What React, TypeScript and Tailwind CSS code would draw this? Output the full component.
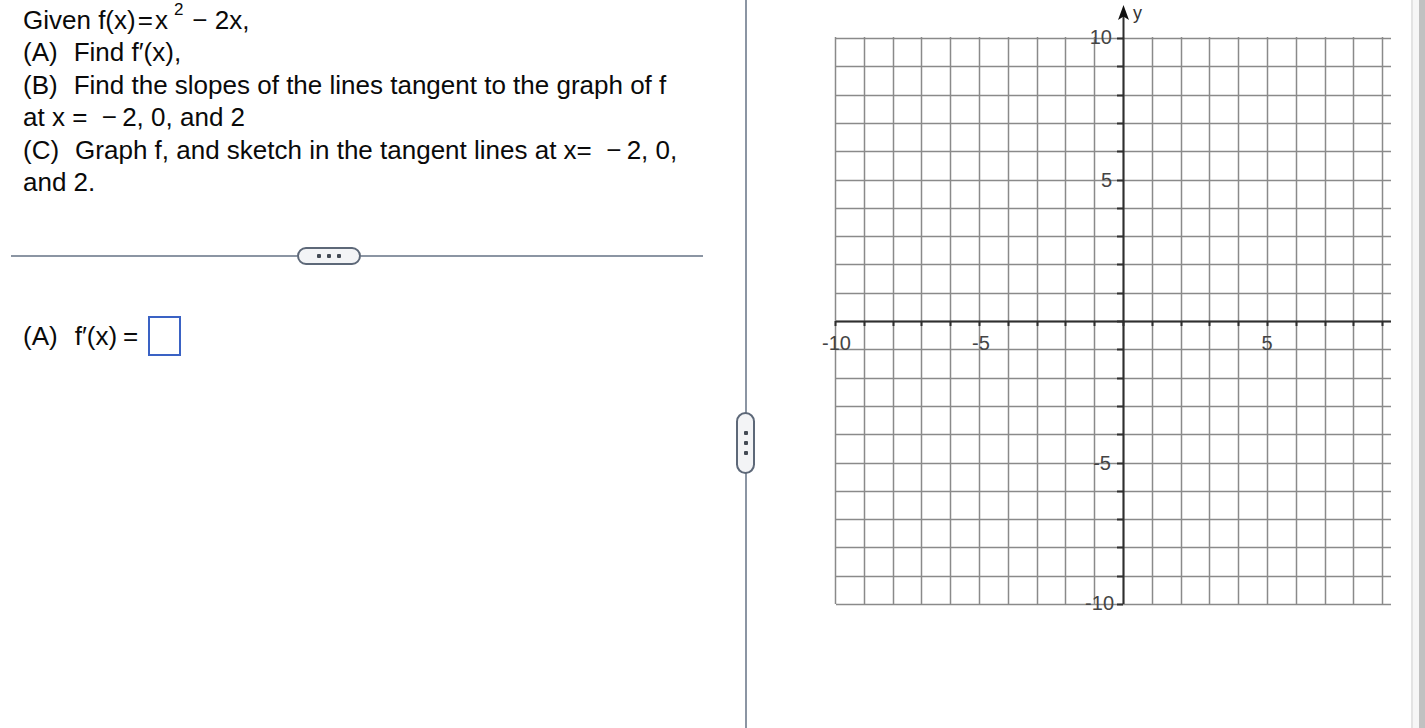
import React from 'react';

const FONT = { fontFamily: '"Liberation Sans", Arial, Helvetica, sans-serif' };

// graph coordinates, page pixels (the svg's viewBox starts at the panel's left edge)
const X0 = 1123;
const Y0 = 321;
const DX = 28.8;
const DY = 28.3;
const LEFT = 836;
const RIGHT = 1391;
const TOP = 37;
const BOTTOM = 604;

// half-pixel centres keep the 1.5px grid lines crisp
const xs = Array.from({ length: 20 }, (_, i) => Math.round(X0 + (i - 10) * DX) + 0.5);
const ys = Array.from({ length: 21 }, (_, i) => Math.round(Y0 + (i - 10) * DY) + 0.5);

function Graph() {
  return (
    <svg width={664} height={728} viewBox="747 0 664 728" className="block">
      <g stroke="#8a8a8a" strokeWidth={1.5}>
        {xs.map((x) => (
          <line key={'v' + x} x1={x} y1={TOP} x2={x} y2={BOTTOM} />
        ))}
        {ys.map((y) => (
          <line key={'h' + y} x1={LEFT} y1={y} x2={RIGHT} y2={y} />
        ))}
      </g>

      <g stroke="#2f2f2f" strokeWidth={2}>
        <line x1={LEFT} y1={Y0 + 0.5} x2={RIGHT} y2={Y0 + 0.5} />
        <line x1={X0 + 0.5} y1={BOTTOM} x2={X0 + 0.5} y2={14} />
        {xs.map((x) => (
          <line key={'tx' + x} x1={x} y1={Y0} x2={x} y2={Y0 + 5} />
        ))}
        {ys.map((y) => (
          <line key={'ty' + y} x1={X0 - 6} y1={y} x2={X0} y2={y} />
        ))}
      </g>
      <path d="M1123.5 5 L1118 20 L1123.5 16.5 L1129 20 Z" fill="#111" />

      <g fill="#444" fontSize={20} style={FONT}>
        <text x={1112} y={44} textAnchor="end">10</text>
        <text x={1112} y={187} textAnchor="end">5</text>
        <text x={1111} y={470} textAnchor="end">-5</text>
        <text x={1114} y={610} textAnchor="end">-10</text>
        <text x={836.5} y={350} textAnchor="middle">-10</text>
        <text x={981} y={350} textAnchor="middle">-5</text>
        <text x={1267} y={350} textAnchor="middle">5</text>
      </g>
      <text x={1133} y={19} fontSize={18} fill="#333" style={FONT}>y</text>
    </svg>
  );
}

function Dots({ vertical }: { vertical?: boolean }) {
  return (
    <div className={vertical ? 'flex flex-col items-center gap-[6px]' : 'flex items-center gap-[6px]'}>
      <span className="h-[4px] w-[4px] rounded-[1px] bg-[#444b55]" />
      <span className="h-[4px] w-[4px] rounded-[1px] bg-[#444b55]" />
      <span className="h-[4px] w-[4px] rounded-[1px] bg-[#444b55]" />
    </div>
  );
}

export default function App() {
  return (
    <div className="flex h-[728px] w-[1425px] overflow-hidden bg-white text-[#0a0a0a]" style={FONT}>
      <div className="w-[745px] shrink-0">
        <div className="pl-[23px] pt-[3.5px] text-[26px] leading-[32.5px]">
          <div>
            Given f(x)<span className="mx-[2px]">=</span>x
            <span className="relative top-[-14px] ml-[6px] text-[17px] leading-none">2</span>
            <span className="ml-[9px]">−</span> 2x,
          </div>
          <div>
            <span className="mr-[16px]">(A)</span>Find f′(x),
          </div>
          <div>
            <span className="mr-[16px]">(B)</span>Find the slopes of the lines tangent to the graph of f
          </div>
          <div>at x = &nbsp;−&thinsp;2, 0, and 2</div>
          <div>
            <span className="mr-[16px]">(C)</span>Graph f, and sketch in the tangent lines at x= &nbsp;−&thinsp;2, 0,
          </div>
          <div>and 2.</div>
        </div>

        <div className="mt-[48.5px] flex h-[18px] items-center pl-[11px]">
          <div className="h-[2px] w-[286px] bg-[#8b95a3]" />
          <div className="flex h-[18px] w-[64px] items-center justify-center rounded-full border-2 border-[#5d6878] bg-[#f3f4f6]">
            <Dots />
          </div>
          <div className="h-[2px] w-[342px] bg-[#8b95a3]" />
        </div>

        <div className="mt-[51px] flex items-center pl-[23px] text-[26px] leading-[32px]">
          <span className="mr-[17px]">(A)</span>
          <span>f′(x)</span>
          <span className="ml-[6px]">=</span>
          <span className="ml-[10px] h-[40px] w-[33px] border-2 border-[#3a62c4]" />
        </div>
      </div>

      <div className="relative w-[2px] shrink-0 bg-[#8b95a3]">
        <div className="absolute left-[-9px] top-[412px] flex h-[62px] w-[19px] items-center justify-center rounded-full border-2 border-[#5d6878] bg-[#f3f4f6]">
          <Dots vertical />
        </div>
      </div>

      <div className="flex-1">
        <Graph />
      </div>

      <div className="flex w-[14px] shrink-0">
        <div className="w-[2px] bg-[#e3e3e3]" />
        <div className="w-[6px] bg-[#f6f6f6]" />
        <div className="w-[6px] bg-[#c1c1c1]" />
      </div>
    </div>
  );
}
